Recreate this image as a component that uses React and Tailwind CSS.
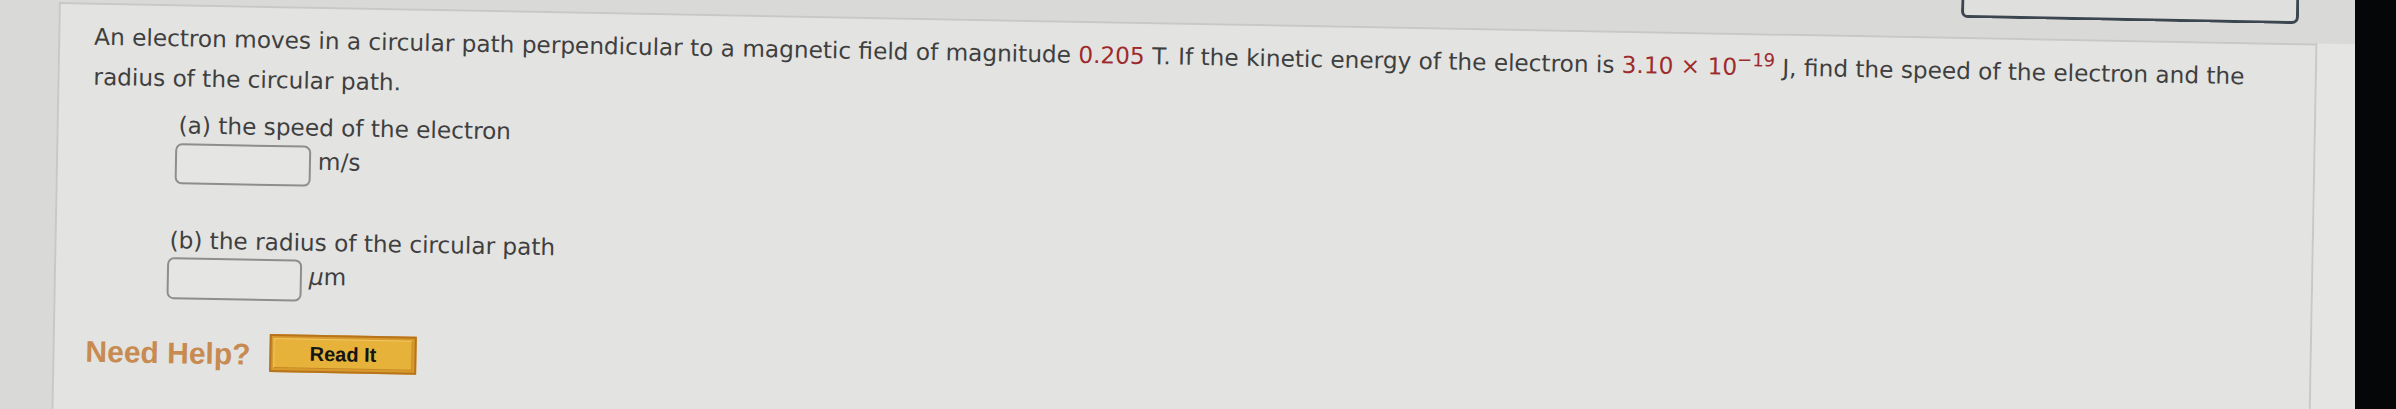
export default function App() {
  return (
    <div className="flex h-[409px] w-[2396px] overflow-hidden bg-[#d9d9d7] font-['DejaVu_Sans',sans-serif] text-[#3f3f3f]">
      <div className="h-full w-[2355px] shrink-0 overflow-hidden">
        {/* the photo is slightly tilted, so the whole sheet is rotated a little */}
        <div className="mt-[-60px] w-[2440px] origin-top-left rotate-[1.05deg]">
          <div className="ml-[1962px] h-[42px] w-[338px] rounded-b-[7px] border-[3px] border-t-0 border-[#3b4650] bg-[#dfdfdd]" />
          <div className="mt-[19px] flex">
            <div className="w-[60px] shrink-0" />
            <div className="h-[480px] w-[2259px] shrink-0 border-x-2 border-t-2 border-[#c8c8c6] bg-[#e3e3e1]">
              <p className="whitespace-nowrap pl-[34px] pt-[12px] text-[23.2px] leading-[40px]">
                An electron moves in a circular path perpendicular to a magnetic field of magnitude{" "}
                <span className="text-[#9e2b2c]">0.205</span> T. If the kinetic energy of the electron is{" "}
                <span className="text-[#9e2b2c]">
                  3.10 × 10<sup className="text-[18px]">−19</sup>
                </span>{" "}
                J, find the speed of the electron and the
                <br />
                radius of the circular path.
              </p>

              <div className="mt-[12px] pl-[120px] text-[23.2px] leading-[30px]">(a) the speed of the electron</div>
              <div className="mt-[3px] flex items-start pl-[117px]">
                <input
                  type="text"
                  className="h-[41px] w-[136px] rounded-[7px] border-2 border-[#8e8e8c] bg-[#e5e5e3] outline-none"
                />
                <span className="ml-[7px] mt-[1px] text-[23.2px] leading-[30px]">m/s</span>
              </div>

              <div className="mt-[41px] pl-[113px] text-[23.2px] leading-[30px]">(b) the radius of the circular path</div>
              <div className="mt-[2px] flex items-start pl-[111px]">
                <input
                  type="text"
                  className="h-[42px] w-[135px] rounded-[7px] border-2 border-[#8e8e8c] bg-[#e5e5e3] outline-none"
                />
                <span className="ml-[7px] mt-[2px] text-[23.2px] leading-[30px]">
                  <i>μ</i>m
                </span>
              </div>

              <div className="mt-[33px] flex items-start pl-[31px] font-['Liberation_Sans',Arial,sans-serif]">
                <span className="mt-[2px] text-[30px] font-bold leading-[38px] text-[#c78a50]">Need Help?</span>
                <button className="ml-[19px] h-[38px] w-[147px] border-2 border-[#b8741c] bg-[#d99a2c] p-[2px]">
                  <span className="flex h-full w-full items-center justify-center border border-[#f0c664] border-b-[#c48624] border-r-[#c48624] bg-[#e6b23a] text-[20px] font-bold text-[#141414]">
                    Read It
                  </span>
                </button>
              </div>
            </div>
            <div className="h-[480px] w-[60px] shrink-0 bg-[#e5e5e4]" />
          </div>
        </div>
      </div>
      <div className="flex-1 bg-[#050607]" />
    </div>
  );
}
